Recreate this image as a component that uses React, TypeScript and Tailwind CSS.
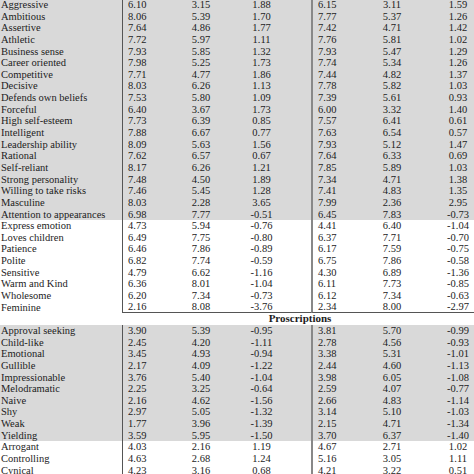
import React from "react";

type R = [string, string, string, string, string, string, string];

const groupA: R[] = [
  ["Aggressive", "6.10", "3.15", "1.88", "6.15", "3.11", "1.59"],
  ["Ambitious", "8.06", "5.39", "1.70", "7.77", "5.37", "1.26"],
  ["Assertive", "7.64", "4.86", "1.77", "7.42", "4.71", "1.42"],
  ["Athletic", "7.72", "5.97", "1.11", "7.76", "5.81", "1.02"],
  ["Business sense", "7.93", "5.85", "1.32", "7.93", "5.47", "1.29"],
  ["Career oriented", "7.98", "5.25", "1.73", "7.74", "5.34", "1.26"],
  ["Competitive", "7.71", "4.77", "1.86", "7.44", "4.82", "1.37"],
  ["Decisive", "8.03", "6.26", "1.13", "7.78", "5.82", "1.03"],
  ["Defends own beliefs", "7.53", "5.80", "1.09", "7.39", "5.61", "0.93"],
  ["Forceful", "6.40", "3.67", "1.73", "6.00", "3.32", "1.40"],
  ["High self-esteem", "7.73", "6.39", "0.85", "7.57", "6.41", "0.61"],
  ["Intelligent", "7.88", "6.67", "0.77", "7.63", "6.54", "0.57"],
  ["Leadership ability", "8.09", "5.63", "1.56", "7.93", "5.12", "1.47"],
  ["Rational", "7.62", "6.57", "0.67", "7.64", "6.33", "0.69"],
  ["Self-reliant", "8.17", "6.26", "1.21", "7.85", "5.89", "1.03"],
  ["Strong personality", "7.48", "4.50", "1.89", "7.34", "4.71", "1.38"],
  ["Willing to take risks", "7.46", "5.45", "1.28", "7.41", "4.83", "1.35"],
  ["Masculine", "8.03", "2.28", "3.65", "7.99", "2.36", "2.95"],
  ["Attention to appearances", "6.98", "7.77", "-0.51", "6.45", "7.83", "-0.73"],
];

const groupB: R[] = [
  ["Express emotion", "4.73", "5.94", "-0.76", "4.41", "6.40", "-1.04"],
  ["Loves children", "6.49", "7.75", "-0.80", "6.37", "7.71", "-0.70"],
  ["Patience", "6.46", "7.86", "-0.89", "6.17", "7.59", "-0.75"],
  ["Polite", "6.82", "7.74", "-0.59", "6.75", "7.86", "-0.58"],
  ["Sensitive", "4.79", "6.62", "-1.16", "4.30", "6.89", "-1.36"],
  ["Warm and Kind", "6.36", "8.01", "-1.04", "6.11", "7.73", "-0.85"],
  ["Wholesome", "6.20", "7.34", "-0.73", "6.12", "7.34", "-0.63"],
  ["Feminine", "2.16", "8.08", "-3.76", "2.34", "8.00", "-2.97"],
];

const groupC: R[] = [
  ["Approval seeking", "3.90", "5.39", "-0.95", "3.81", "5.70", "-0.99"],
  ["Child-like", "2.45", "4.20", "-1.11", "2.78", "4.56", "-0.93"],
  ["Emotional", "3.45", "4.93", "-0.94", "3.38", "5.31", "-1.01"],
  ["Gullible", "2.17", "4.09", "-1.22", "2.44", "4.60", "-1.13"],
  ["Impressionable", "3.76", "5.40", "-1.04", "3.98", "6.05", "-1.08"],
  ["Melodramatic", "2.25", "3.25", "-0.64", "2.59", "4.07", "-0.77"],
  ["Naive", "2.16", "4.62", "-1.56", "2.66", "4.83", "-1.14"],
  ["Shy", "2.97", "5.05", "-1.32", "3.14", "5.10", "-1.03"],
  ["Weak", "1.77", "3.96", "-1.39", "2.15", "4.71", "-1.34"],
  ["Yielding", "3.59", "5.95", "-1.50", "3.70", "6.37", "-1.40"],
];

const groupD: R[] = [
  ["Arrogant", "4.03", "2.16", "1.19", "4.67", "2.71", "1.02"],
  ["Controlling", "4.63", "2.68", "1.24", "5.16", "3.05", "1.11"],
  ["Cynical", "4.23", "3.16", "0.68", "4.21", "3.22", "0.51"],
];

function Row({ r, gray, last }: { r: R; gray?: boolean; last?: boolean }) {
  return (
    <div
      className={
        "flex h-[11.65px] items-center leading-[11.65px] " +
        (gray ? "bg-[#d9d9d9]" : "bg-white")
      }
    >
      <div className="w-[122px] shrink-0 pl-[1px] whitespace-nowrap">{r[0]}</div>
      <div
        className={
          "flex h-full shrink-0 items-center border-l border-[#555] " +
          (last ? "border-b" : "")
        }
      >
        <div className="w-[47px] pl-[5px]">{r[1]}</div>
        <div className="w-[62px] text-center">{r[2]}</div>
        <div className="w-[79px] pr-[20px] text-center">{r[3]}</div>
      </div>
      <div
        className={
          "flex h-full shrink-0 items-center border-l-2 border-[#888] " +
          (last ? "border-b border-b-[#555]" : "")
        }
      >
        <div className="w-[46px] pl-[5px]">{r[4]}</div>
        <div className="w-[66px] text-center">{r[5]}</div>
        <div className="w-[66px] text-center">{r[6]}</div>
      </div>
    </div>
  );
}

export default function App() {
  return (
    <div className="h-[474px] w-[474px] overflow-hidden bg-white">
      <div
        className="mt-[-1px] w-[491px] text-[10.5px] text-[#1c1c1c]"
        style={{ fontFamily: '"Liberation Serif", "Times New Roman", serif' }}
      >
        {groupA.map((r) => (
          <Row key={r[0]} r={r} gray />
        ))}
        {groupB.map((r, i) => (
          <Row key={r[0]} r={r} last={i === groupB.length - 1} />
        ))}
        <div className="flex h-[11.65px] items-center leading-[11.65px]">
          <div className="w-[123px] shrink-0" />
          <div className="w-[354px] text-center text-[11px] font-bold">Proscriptions</div>
        </div>
        {groupC.map((r) => (
          <Row key={r[0]} r={r} gray />
        ))}
        {groupD.map((r) => (
          <Row key={r[0]} r={r} />
        ))}
      </div>
    </div>
  );
}
